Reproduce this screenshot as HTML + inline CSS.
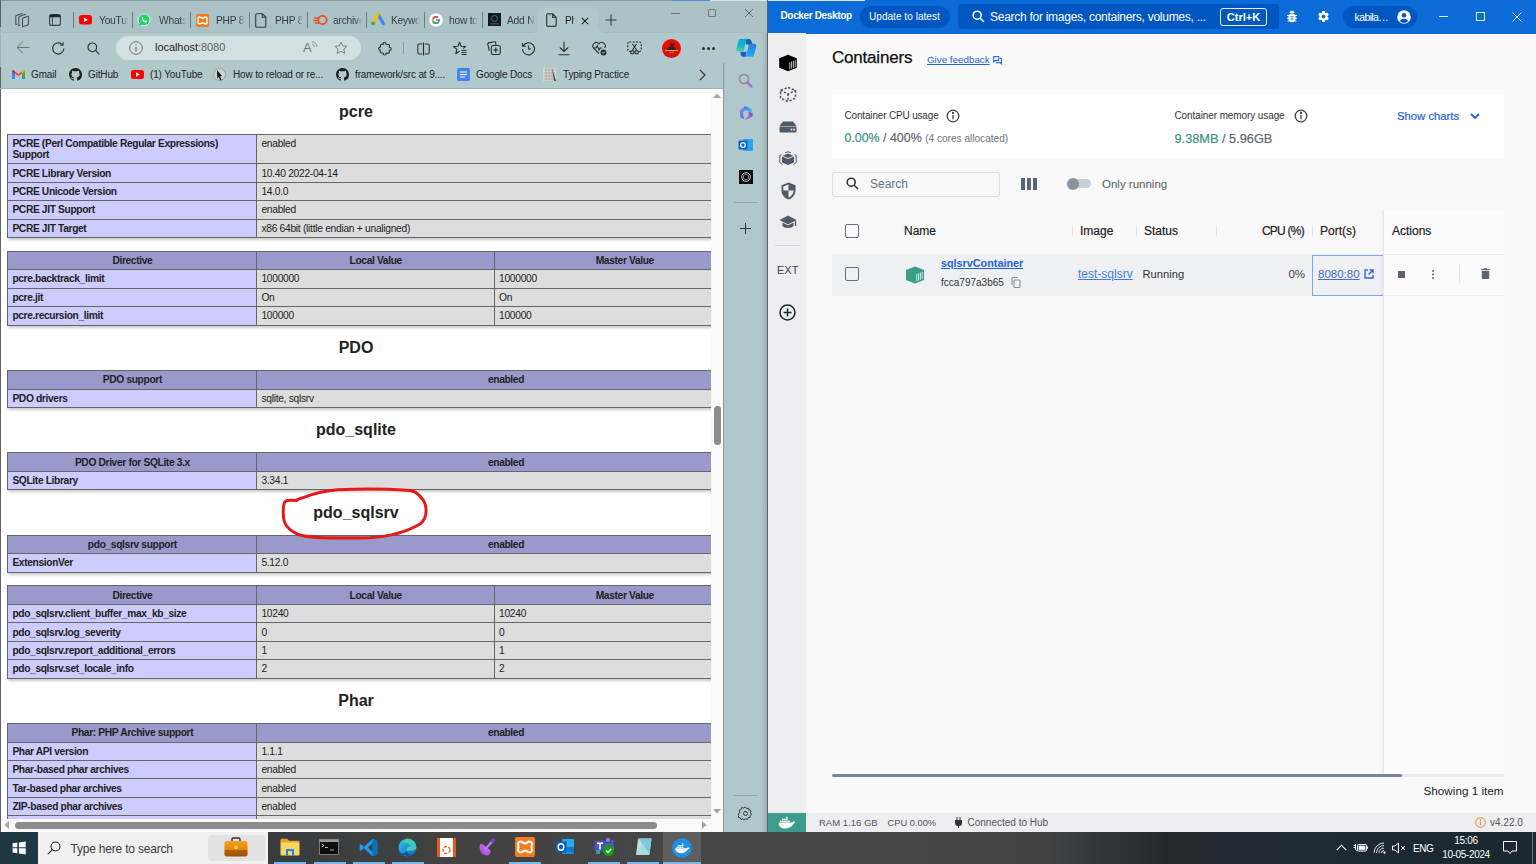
<!DOCTYPE html>
<html><head><meta charset="utf-8">
<style>
*{box-sizing:border-box;margin:0;padding:0}
html,body{width:1536px;height:864px;overflow:hidden;background:#fff;font-family:"Liberation Sans",sans-serif}
.a{position:absolute}
/* ---- edge ---- */
#edge{position:absolute;left:0;top:0;width:768px;height:832px;background:#adc4c8;overflow:hidden}
#tabs{position:absolute;left:0;top:0;width:768px;height:32px;background:#abc3c7}
#toolbar{position:absolute;left:0;top:32px;width:768px;height:30px;background:#b2c9cc}
#bm{position:absolute;left:0;top:62px;width:723px;height:27px;background:#b2c9cc}
#side{position:absolute;left:723px;top:62px;width:45px;height:770px;background:#b0c8cc}
#page{position:absolute;left:1px;top:89px;width:710px;height:730px;background:#fff;overflow:hidden}
/* ---- docker ---- */
#dock{position:absolute;left:768px;top:0;width:768px;height:832px;background:#f9f9f9;overflow:hidden}
#dtitle{position:absolute;left:0;top:0;width:768px;height:33.5px;background:#0b6cd7}
#dnav{position:absolute;left:0;top:33px;width:38px;height:780px;background:#eeeef1}
#dstatus{position:absolute;left:0;top:813px;width:768px;height:19px;background:#eeeef1}
/* ---- taskbar ---- */
#task{position:absolute;left:0;top:832px;width:1536px;height:32px;background:linear-gradient(90deg,#1d3640 0,#1f3a44 2.5%,#383c3e 17.5%,#424242 30%,#474747 50%,#434343 68%,#34383b 71%,#22292e 76%,#1d2a31 85%,#1b2830 100%)}

#php *{box-sizing:content-box}
#php{box-sizing:border-box;position:absolute;left:0;top:0;width:887.5px;zoom:0.8;color:#222;font-family:"Liberation Sans",sans-serif;font-size:16px;padding:0 8px}
#php table{border-collapse:collapse;border:0;width:934px;box-shadow:1px 2px 3px #ccc;margin:1em auto;text-align:left}
#php .center{text-align:center}
#php h2{font-size:125%;margin:0.83em 0;line-height:normal}
#php td,#php th{border:1px solid #666;font-size:12.8px;letter-spacing:-0.45px;vertical-align:baseline;padding:4px 5px;line-height:13.8px}
#php th{text-align:center}
#php .e{background-color:#ccf;width:300px;font-weight:bold}
#php .h{background-color:#99c;font-weight:bold}
#php .v{letter-spacing:-0.35px;background-color:#ddd;max-width:300px;overflow-x:auto;word-wrap:break-word}

.tt{font-size:10.2px;letter-spacing:-0.2px;color:#363d3f;white-space:nowrap;overflow:hidden;line-height:13px;-webkit-mask-image:linear-gradient(90deg,#000 78%,transparent 100%)}
.bt{top:68px;font-size:10px;color:#1f2324;white-space:nowrap;line-height:13px;letter-spacing:-0.15px}
</style></head><body>
<div id="edge">
  <div id="tabs"></div>
  <div id="toolbar"></div>
  <div id="bm"></div>
  <div id="side"></div>
<div class="a" style="left:0;top:0;width:768px;height:1px;background:#87979a"></div><div class="a" style="left:672px;top:0;width:38px;height:1px;background:#4a8fd8"></div><div class="a" style="left:710px;top:0;width:58px;height:1px;background:#dfe3e6"></div>
<div class="a" style="left:0;top:0;width:1px;height:832px;background:#5d6466"></div><div class="a" style="left:0;top:27px;width:1px;height:40px;background:#a3b0b2"></div>
<div class="a" style="left:0;top:32px;width:768px;height:1px;background:#a6bcbf"></div>
<!-- tab strip icons -->
<svg class="a" style="left:14.5px;top:12.5px" width="14" height="15" viewBox="0 0 14 15" fill="none" stroke="#4a5456" stroke-width="1.1" stroke-linejoin="round"><path d="M7.5 5.2L12.6 3.3Q13.5 3 13.5 4V10.8Q13.5 11.6 12.7 11.9L8.3 13.6Q7.5 13.9 7.5 13V5.2Z"/><path d="M5 12.3L4.3 12.6Q3.8 12.7 3.8 12.2V4.5Q3.8 3.8 4.5 3.5L9.7 1.6Q10.5 1.4 10.5 2"/><path d="M2.2 11.2L1.3 11.4Q0.8 11.5 0.8 11V3.4Q0.8 2.7 1.5 2.4L6.3 0.7Q7 0.5 7.2 1"/></svg>
<svg class="a" style="left:49px;top:14px" width="12" height="12" viewBox="0 0 12 12"><rect x="0.6" y="0.6" width="10.8" height="10.8" rx="2" fill="none" stroke="#3b4446" stroke-width="1.1"/><path d="M0.6 2.6Q0.6 0.6 2.6 0.6H9.4Q11.4 0.6 11.4 2.6V3.2H0.6Z" fill="#1f2526"/><path d="M3.4 3V11.4" stroke="#3b4446" stroke-width="0.9"/></svg>
<div class="a" style="left:73px;top:12px;width:1px;height:16px;background:#6f7f82"></div>
<svg class="a" style="left:78.5px;top:15px" width="13" height="10" viewBox="0 0 13 10"><rect width="13" height="9.5" rx="2.5" fill="#f00"/><path d="M5 2.6V6.9L8.8 4.75Z" fill="#fff"/></svg><div class="a tt" style="left:99px;top:14px;width:29px">YouTube</div><div class="a" style="left:132px;top:12px;width:1px;height:16px;background:#6f7f82"></div><svg class="a" style="left:137px;top:13px" width="14" height="14" viewBox="0 0 14 14"><circle cx="7" cy="6.8" r="6" fill="#25d366" stroke="#fff" stroke-width="0.8"/><path d="M1.8 12.8 L2.8 9.5 L4.8 11.5Z" fill="#25d366"/><path d="M4.8 4.2c0.3-0.6 0.8-0.6 1 0l0.5 1c0.1 0.3-0.4 0.6-0.3 0.9c0.4 0.8 1.1 1.4 1.9 1.8c0.3 0.1 0.6-0.4 0.9-0.3l1 0.5c0.5 0.3 0.4 0.8-0.1 1.2c-2 1.2-5.4-2-4.9-5.1z" fill="#fff"/></svg><div class="a tt" style="left:159px;top:14px;width:27px">WhatsApp</div><div class="a" style="left:190px;top:12px;width:1px;height:16px;background:#6f7f82"></div><svg class="a" style="left:196px;top:13.5px" width="13" height="13" viewBox="0 0 13 13"><rect width="13" height="13" rx="1.5" fill="#f57a1f"/><path d="M3.5 3C2 3 1.8 4.3 2.1 5.3C2.3 6 2.3 7 2.1 7.7C1.8 8.7 2 10 3.5 10C4.8 10 5.3 9 6.5 8.8C7.7 9 8.2 10 9.5 10C11 10 11.2 8.7 10.9 7.7C10.7 7 10.7 6 10.9 5.3C11.2 4.3 11 3 9.5 3C8.2 3 7.7 4 6.5 4.2C5.3 4 4.8 3 3.5 3Z" fill="none" stroke="#fff" stroke-width="1.4"/></svg><div class="a tt" style="left:216px;top:14px;width:29px">PHP 8.2</div><div class="a" style="left:249px;top:12px;width:1px;height:16px;background:#6f7f82"></div><svg class="a" style="left:255px;top:13px" width="12" height="15" viewBox="0 0 12 15" fill="none" stroke="#3a3a3a" stroke-width="1.1"><path d="M2 0.8H7.5L10.8 4.1V13a1.3 1.3 0 0 1-1.3 1.3H2A1.3 1.3 0 0 1 0.7 13V2.1A1.3 1.3 0 0 1 2 0.8z M7.3 0.8V4.3H10.8"/></svg><div class="a tt" style="left:275px;top:14px;width:28px">PHP 8.2</div><div class="a" style="left:307px;top:12px;width:1px;height:16px;background:#6f7f82"></div><svg class="a" style="left:313px;top:14px" width="15" height="12" viewBox="0 0 15 12"><path d="M1 4h5M0 6.5h5M2 9h4" stroke="#f04e23" stroke-width="1.4"/><circle cx="9.5" cy="6" r="4.2" fill="none" stroke="#f04e23" stroke-width="1.8"/></svg><div class="a tt" style="left:333px;top:14px;width:29px">archive</div><div class="a" style="left:366px;top:12px;width:1px;height:16px;background:#6f7f82"></div><svg class="a" style="left:371px;top:13px" width="14" height="13" viewBox="0 0 14 13"><path d="M7.2 1.5L12.3 10.5" stroke="#4285f4" stroke-width="3.4" stroke-linecap="round"/><path d="M6.8 1.5L2.3 9.5" stroke="#fbbc04" stroke-width="3.4" stroke-linecap="round"/><circle cx="2.2" cy="10.3" r="1.9" fill="#34a853"/></svg><div class="a tt" style="left:391px;top:14px;width:29px">Keyword</div><div class="a" style="left:424px;top:12px;width:1px;height:16px;background:#6f7f82"></div><svg class="a" style="left:429px;top:13px" width="14" height="14" viewBox="0 0 14 14"><circle cx="7" cy="7" r="6.8" fill="#fff"/><path d="M10.8 6.2H7v1.6h2.2c-0.3 1-1.1 1.7-2.2 1.7a2.5 2.5 0 1 1 1.6-4.4l1.1-1.1A4.1 4.1 0 1 0 11 7c0-0.3 0-0.5-0.1-0.8z" fill="#4285f4"/><path d="M3.4 5.2A4.1 4.1 0 0 1 9.7 4l-1.1 1.1A2.5 2.5 0 0 0 4.8 5.9z" fill="#ea4335"/><path d="M3.3 8.7A4.1 4.1 0 0 0 9.3 10.3l-1-1a2.5 2.5 0 0 1-3.5-1.2z" fill="#34a853"/><path d="M2.9 7a4.1 4.1 0 0 0 0.4 1.7l1.5-0.6a2.5 2.5 0 0 1 0-2.2l-1.4-0.7A4.1 4.1 0 0 0 2.9 7z" fill="#fbbc04"/></svg><div class="a tt" style="left:449px;top:14px;width:29px">how to</div><div class="a" style="left:482px;top:12px;width:1px;height:16px;background:#6f7f82"></div><svg class="a" style="left:487.5px;top:13px" width="13" height="13" viewBox="0 0 13 13"><rect width="13" height="13" fill="#151a1e"/><circle cx="6.5" cy="5.5" r="3" fill="none" stroke="#2d7da0" stroke-width="0.9"/><rect x="2" y="10" width="9" height="1.5" fill="#3c4650"/></svg><div class="a tt" style="left:507px;top:14px;width:28px">Add New</div><!-- active tab -->
<div class="a" style="left:538px;top:6.5px;width:60px;height:27px;background:#b2c9cc;border-radius:6px 6px 0 0"></div>
<div class="a" style="left:533px;top:27px;width:6px;height:6px;background:radial-gradient(circle at 0 0,transparent 5.5px,#b2c9cc 6px)"></div>
<div class="a" style="left:598px;top:27px;width:6px;height:6px;background:radial-gradient(circle at 100% 0,transparent 5.5px,#b2c9cc 6px)"></div>
<svg class="a" style="left:546px;top:13px" width="11" height="14" viewBox="0 0 11 14" fill="none" stroke="#3a3a3a" stroke-width="1.2"><path d="M2 0.8H6.8L10.2 4.2V12a1.3 1.3 0 0 1-1.3 1.3H2A1.3 1.3 0 0 1 0.7 12V2.1A1.3 1.3 0 0 1 2 0.8z M6.6 0.8V4.3H10.2"/></svg>
<div class="a tt" style="left:565px;top:14px;width:10px;color:#222">Ph</div>
<svg class="a" style="left:581px;top:16.5px" width="8" height="8" viewBox="0 0 8 8" stroke="#222" stroke-width="1.1"><path d="M0.8 0.8L7.2 7.2M7.2 0.8L0.8 7.2"/></svg>
<svg class="a" style="left:605px;top:14px" width="12" height="12" viewBox="0 0 12 12" stroke="#333" stroke-width="1"><path d="M6 0.5V11.5M0.5 6H11.5"/></svg>
<!-- window controls -->
<div class="a" style="left:671px;top:13px;width:9px;height:1px;background:#777"></div>
<div class="a" style="left:708px;top:9px;width:8px;height:8px;border:1px solid #777;border-radius:1px"></div>
<svg class="a" style="left:744px;top:8px" width="10" height="10" viewBox="0 0 10 10" stroke="#666" stroke-width="1"><path d="M1 1L9 9M9 1L1 9"/></svg>
<!-- toolbar -->
<svg class="a" style="left:16px;top:41px" width="14" height="13" viewBox="0 0 14 13" fill="none" stroke="#6a7375" stroke-width="1"><path d="M13.5 6.5H1M6.8 0.8L1 6.5L6.8 12.2"/></svg>
<svg class="a" style="left:51px;top:41px" width="15" height="15" viewBox="0 0 15 15" fill="none" stroke="#2f3435" stroke-width="1.2"><path d="M12.8 7.5A5.6 5.6 0 1 1 10.6 3"/><path d="M9.3 4.2L12 4.2L12 1.2" stroke-width="1.2"/></svg>
<svg class="a" style="left:87px;top:42px" width="13" height="13" viewBox="0 0 13 13" fill="none" stroke="#2f3435" stroke-width="1.2"><circle cx="5.3" cy="5.3" r="4.3"/><path d="M8.4 8.4L12.3 12.3"/></svg>
<div class="a" style="left:116px;top:36px;width:245px;height:24px;border-radius:12px;background:#d3e0e2"></div>
<svg class="a" style="left:129px;top:41px" width="14" height="14" viewBox="0 0 14 14" fill="none" stroke="#666" stroke-width="0.9"><circle cx="7" cy="7" r="6.3"/><path d="M7 6V10.5" stroke-width="1.1"/><circle cx="7" cy="3.9" r="0.6" fill="#666" stroke="none"/></svg>
<div class="a" style="left:155px;top:41px;font-size:11px;color:#1f1f1f;letter-spacing:-0.05px">localhost<span style="color:#5b6366">:8080</span></div>
<div class="a" style="left:303px;top:40px;font-size:13px;color:#777;font-weight:normal">A</div>
<svg class="a" style="left:311px;top:41px" width="7" height="7" viewBox="0 0 7 7" fill="none" stroke="#888" stroke-width="0.8"><path d="M1 3.5A2.5 2.5 0 0 1 3.5 6M1 1A5 5 0 0 1 6 6"/></svg>
<svg class="a" style="left:334px;top:41px" width="14" height="14" viewBox="0 0 14 14" fill="none" stroke="#7a8385" stroke-width="1"><path d="M7 1L8.8 5L13 5.3L9.8 8.1L10.8 12.5L7 10.2L3.2 12.5L4.2 8.1L1 5.3L5.2 5Z" stroke-linejoin="round"/></svg>
<svg class="a" style="left:377.5px;top:41px" width="14" height="15" viewBox="0 0 14 15" fill="none" stroke="#2a2e2f" stroke-width="1.1" stroke-linejoin="round"><path d="M6.5 1.2C7.6 1.2 8 2.2 7.8 3.2L10.8 3.5C11.3 3.6 11.5 4 11.4 4.5L11.2 6.3C12.3 6.2 13.2 6.8 13.2 7.8S12.3 9.4 11.2 9.3L11.3 11.4C11.3 11.9 11 12.2 10.5 12.2L8 12.1C8.2 13.2 7.6 14 6.6 14S5 13.2 5.2 12.1L2.8 11.8C2.3 11.7 2 11.4 2.1 10.9L2.3 9C1.2 9.2 0.7 8.4 0.7 7.5S1.3 5.9 2.4 6.1L2.6 4C2.7 3.5 3 3.2 3.5 3.2L5.3 3.2C5.1 2.1 5.5 1.2 6.5 1.2Z"/></svg>
<div class="a" style="left:403px;top:42px;width:1px;height:12px;background:#8a9a9d"></div>
<svg class="a" style="left:416.5px;top:41.5px" width="13" height="14" viewBox="0 0 13 14" fill="none" stroke="#2a2e2f" stroke-width="1.1"><path d="M5.2 2H2.2Q0.8 2 0.8 3.4V10.6Q0.8 12 2.2 12H5.2M7.8 2H10.8Q12.2 2 12.2 3.4V10.6Q12.2 12 10.8 12H7.8"/><path d="M6.5 0.5V13.5" stroke-width="1.2"/></svg>
<svg class="a" style="left:452px;top:41px" width="15" height="15" viewBox="0 0 15 15" fill="none" stroke="#2a2e2f" stroke-width="1.1" stroke-linejoin="round"><path d="M7.5 10.3L3.8 12.7L4.9 8.4L1.5 5.6L5.9 5.3L7.5 1.2L9.1 5.3L13.5 5.6L11.2 7.5"/><path d="M9.5 9.5H14.5M9.5 11.5H14.5M9.5 13.5H14.5"/></svg>
<svg class="a" style="left:487px;top:41px" width="14" height="14" viewBox="0 0 14 14" fill="none" stroke="#2a2e2f" stroke-width="1.1" stroke-linejoin="round"><path d="M2.3 9.8L0.8 3.2Q0.6 2.2 1.6 1.9L7.5 0.8Q8.5 0.6 8.7 1.6L8.9 4.3"/><rect x="4.3" y="4.5" width="9" height="9" rx="1.8"/><path d="M8.8 6.5V11.5M6.3 9H11.3" stroke-width="1.2"/></svg>
<svg class="a" style="left:521px;top:41px" width="15" height="15" viewBox="0 0 15 15" fill="none" stroke="#2a2e2f" stroke-width="1.1"><path d="M2.2 5A6 6 0 1 1 1.5 8"/><path d="M1.5 2V5.3H4.8M7.5 4.5V8H10"/></svg>
<svg class="a" style="left:558px;top:41px" width="12" height="15" viewBox="0 0 12 15" fill="none" stroke="#2a2e2f" stroke-width="1.1"><path d="M6 0.5V10.5M1.8 6.5L6 10.5L10.2 6.5M0.5 13.8H11.5"/></svg>
<svg class="a" style="left:592px;top:41px" width="15" height="15" viewBox="0 0 15 15" fill="none" stroke="#2a2e2f" stroke-width="1.1"><path d="M7 12.5L1.8 7.3A3.3 3.3 0 0 1 7 2.8A3.3 3.3 0 0 1 12.5 7"/><path d="M1 7H4L5.3 4.8L7 9L8.3 7H10"/><circle cx="11.5" cy="11.5" r="3" fill="#2a2e2f" stroke="none"/><path d="M10.2 11.5L11.2 12.4L12.8 10.6" stroke="#fff" stroke-width="0.8"/></svg>
<svg class="a" style="left:627px;top:41px" width="15" height="14" viewBox="0 0 15 14" fill="none" stroke="#2a2e2f" stroke-width="1.1"><rect x="0.8" y="1" width="13.4" height="9.5" rx="1.5" stroke-dasharray="2 1.3"/><path d="M5.5 3L9.5 9M9.5 3L5.5 9"/><circle cx="5.3" cy="11.3" r="1.7" fill="#b2c9cc"/><circle cx="9.7" cy="11.3" r="1.7" fill="#b2c9cc"/></svg>
<div class="a" style="left:662px;top:38.5px;width:19px;height:19px;border-radius:50%;background:#e60b0b;overflow:hidden"><div class="a" style="left:7.5px;top:4.5px;width:4px;height:4px;border-radius:50%;background:#3a2418"></div><div class="a" style="left:5px;top:8px;width:9px;height:4px;border-radius:3px 3px 0 0;background:#2b2420"></div><div class="a" style="left:3px;top:11px;width:13px;height:1.6px;background:#c8c020"></div><div class="a" style="left:7px;top:13px;width:5px;height:1.2px;background:#777"></div></div>
<div class="a" style="left:702px;top:47px;width:3px;height:3px;border-radius:50%;background:#2a2e2f"></div>
<div class="a" style="left:707px;top:47px;width:3px;height:3px;border-radius:50%;background:#2a2e2f"></div>
<div class="a" style="left:712px;top:47px;width:3px;height:3px;border-radius:50%;background:#2a2e2f"></div>
<svg class="a" style="left:733px;top:36px" width="26" height="24" viewBox="733 36 26 24"><defs><linearGradient id="cpa" x1="0" y1="1" x2="0.3" y2="0"><stop offset="0" stop-color="#55d98a"/><stop offset="0.5" stop-color="#19b5c9"/><stop offset="1" stop-color="#07a6e0"/></linearGradient><linearGradient id="cpb" x1="0.3" y1="1" x2="0.7" y2="0"><stop offset="0" stop-color="#17b4f7"/><stop offset="1" stop-color="#2b7be0"/></linearGradient></defs><path d="M745.5 39.2L749 38.9C750.5 38.9 751.3 40 751.6 41.5L752.3 44.2L746 44.5Z" fill="#0c6a9f"/><path d="M740.5 52L746.5 51.8L745.5 56.8H743.2C741.8 56.8 741 55.8 740.7 54.5Z" fill="#2a4fd6"/><path d="M740.5 38.8H748.2C746.8 39.5 746.2 40.8 745.8 42.5L743.5 51.8H738.2C736.6 51.8 735.9 50.6 736.3 49L738.3 41.2C738.7 39.8 739.3 38.8 740.5 38.8Z" fill="url(#cpa)"/><path d="M752 56.8H744.3C745.7 56.1 746.3 54.8 746.7 53.1L749 43.8H754.3C755.9 43.8 756.6 45 756.2 46.6L754.2 54.4C753.8 55.8 753.2 56.8 752 56.8Z" fill="url(#cpb)"/></svg>
<!-- bookmarks -->
<div class="a" style="left:0;top:88px;width:723px;height:1px;background:#9cafb2"></div>
<svg class="a" style="left:12px;top:70px" width="13" height="9" viewBox="0 0 13 9"><path d="M0 1.2V9H3V3.5L6.5 6L10 3.5V9H13V1.2L12 0L6.5 4L1 0Z" fill="#ea4335"/><path d="M0 1.2V9H3V3.5Z" fill="#4285f4"/><path d="M10 3.5V9H13V1.2Z" fill="#34a853"/><path d="M13 1.2L12 0L10 1.5V3.5Z" fill="#fbbc04"/><path d="M0 1.2L1 0L3 1.5V3.5Z" fill="#c5221f"/></svg>
<div class="a bt" style="left:31px">Gmail</div>
<svg class="a" style="left:69px;top:68px" width="13" height="13" viewBox="0 0 16 16"><path fill="#1b1f23" d="M8 0C3.58 0 0 3.58 0 8c0 3.54 2.29 6.53 5.47 7.59.4.07.55-.17.55-.38 0-.19-.01-.82-.01-1.49-2.01.37-2.53-.49-2.69-.94-.09-.23-.48-.94-.82-1.13-.28-.15-.68-.52-.01-.53.63-.01 1.08.58 1.23.82.72 1.21 1.87.87 2.33.66.07-.52.28-.87.51-1.07-1.78-.2-3.64-.89-3.64-3.95 0-.87.31-1.59.82-2.15-.08-.2-.36-1.02.08-2.12 0 0 .67-.21 2.2.82.64-.18 1.32-.27 2-.27.68 0 1.36.09 2 .27 1.53-1.04 2.2-.82 2.2-.82.44 1.1.16 1.92.08 2.12.51.56.82 1.27.82 2.15 0 3.07-1.87 3.75-3.65 3.95.29.25.54.73.54 1.48 0 1.07-.01 1.93-.01 2.2 0 .21.15.46.55.38A8.013 8.013 0 0016 8c0-4.42-3.58-8-8-8z"/></svg>
<div class="a bt" style="left:88px">GitHub</div>
<svg class="a" style="left:131px;top:70px" width="13" height="9" viewBox="0 0 13 9"><rect width="13" height="9" rx="2.3" fill="#f00"/><path d="M5 2.3V6.7L8.8 4.5Z" fill="#fff"/></svg>
<div class="a bt" style="left:150px">(1) YouTube</div>
<svg class="a" style="left:213px;top:68px" width="13" height="13" viewBox="0 0 13 13"><circle cx="6.5" cy="6.5" r="6" fill="#c8d4d6" stroke="#7d8a8c" stroke-width="0.6"/><path d="M4 2L9 8L7 8.5L8.5 12L7.3 12.5L5.8 9L4.3 10.5Z" fill="#111"/></svg>
<div class="a bt" style="left:233px">How to reload or re...</div>
<svg class="a" style="left:336px;top:68px" width="13" height="13" viewBox="0 0 16 16"><path fill="#1b1f23" d="M8 0C3.58 0 0 3.580 0 8c0 3.54 2.29 6.53 5.47 7.59.4.07.55-.17.55-.38 0-.19-.01-.82-.01-1.49-2.01.37-2.53-.49-2.690-.94-.09-.23-.48-.94-.82-1.13-.28-.15-.68-.52-.01-.53.63-.01 1.08.58 1.23.82.72 1.21 1.87.87 2.33.66.07-.52.28-.87.51-1.07-1.78-.2-3.64-.89-3.64-3.95 0-.87.31-1.59.82-2.15-.08-.2-.36-1.02.08-2.12 0 0 .67-.21 2.2.82.64-.18 1.32-.27 2-.27.68 0 1.36.09 2 .27 1.53-1.04 2.2-.82 2.2-.82.44 1.1.16 1.92.08 2.12.51.56.82 1.27.82 2.15 0 3.07-1.87 3.75-3.65 3.95.29.25.54.73.54 1.48 0 1.07-.01 1.93-.01 2.2 0 .21.15.46.55.38A8.013 8.013 0 0016 8c0-4.42-3.58-8-8-8z"/></svg>
<div class="a bt" style="left:355px">framework/src at 9....</div>
<svg class="a" style="left:457px;top:68px" width="13" height="13" viewBox="0 0 13 13"><rect width="13" height="13" rx="1.5" fill="#4285f4"/><path d="M3 4H10M3 6.5H10M3 9H8" stroke="#fff" stroke-width="1.2"/></svg>
<div class="a bt" style="left:476px">Google Docs</div>
<svg class="a" style="left:543px;top:68px" width="13" height="13" viewBox="0 0 13 13"><rect width="13" height="13" fill="#d8d8d8"/><path d="M1 2H12M1 5H12M1 8H12M1 11H12M3 0V13M6 0V13M9 0V13" stroke="#9a9a9a" stroke-width="0.6"/><path d="M9 0L13 13H11Z" fill="#444"/></svg>
<div class="a bt" style="left:563px">Typing Practice</div>
<svg class="a" style="left:699px;top:69px" width="7" height="12" viewBox="0 0 7 12" fill="none" stroke="#333" stroke-width="1.1"><path d="M1 1L6 6L1 11"/></svg>
<!-- sidebar -->
<div class="a" style="left:723px;top:63px;width:1px;height:769px;background:#8b9a9d"></div>
<div class="a" style="left:761px;top:33px;width:6px;height:799px;background:linear-gradient(90deg,rgba(150,170,174,0),rgba(140,160,164,0.55))"></div>
<div class="a" style="left:767px;top:0;width:1px;height:832px;background:#5b6264"></div>
<svg class="a" style="left:738px;top:73px" width="15" height="15" viewBox="0 0 15 15"><circle cx="6" cy="6" r="4.5" fill="none" stroke="#8b8b8b" stroke-width="1.6"/><path d="M9.3 9.3L13.5 13.5" stroke="#a66ad8" stroke-width="2.4" stroke-linecap="round"/></svg>
<svg class="a" style="left:738px;top:105px" width="16" height="16" viewBox="738 105 16 16"><defs><linearGradient id="m1" x1="0" y1="0" x2="1" y2="1"><stop offset="0" stop-color="#3a6fe0"/><stop offset="1" stop-color="#4fd6f5"/></linearGradient><linearGradient id="m2" x1="1" y1="0" x2="0" y2="1"><stop offset="0" stop-color="#6b3fb0"/><stop offset="1" stop-color="#d28af5"/></linearGradient><linearGradient id="m3" x1="0" y1="0" x2="0" y2="1"><stop offset="0" stop-color="#b07af0"/><stop offset="1" stop-color="#2f7fe0"/></linearGradient></defs><path d="M744 106.8L746 106.2L752 109.6L752.8 113.5L748.7 111.5L746.3 110.3L744.3 111Z" fill="url(#m1)"/><path d="M752.8 113.5L752.7 116.3L746.5 120L744 119.2L748 116.6L748.8 114.3L748.7 111.5Z" fill="url(#m2)"/><path d="M744 119.2L740.5 117.3L739.8 110.5L744 106.8L744.3 111L743 112.3L743.3 115.3Z" fill="url(#m3)"/></svg>
<svg class="a" style="left:738px;top:137px" width="16" height="16" viewBox="0 0 16 16"><rect x="5" y="2" width="10" height="12" rx="1" fill="#28a8ea"/><rect x="0.5" y="3.5" width="9" height="9" rx="1" fill="#0a64c8"/><circle cx="5" cy="8" r="2.3" fill="none" stroke="#fff" stroke-width="1.3"/></svg>
<svg class="a" style="left:739px;top:170px" width="14" height="14" viewBox="0 0 14 14"><rect width="14" height="14" fill="#0b0b0b"/><circle cx="7" cy="7" r="4.3" fill="none" stroke="#cfcfcf" stroke-width="1"/><path d="M4.5 5.5L7 4L9.5 5.5V8.5L7 10L4.5 8.5Z" fill="none" stroke="#bbb" stroke-width="0.7"/></svg>
<div class="a" style="left:734px;top:202px;width:23px;height:1px;background:#94a6a9"></div>
<svg class="a" style="left:740px;top:223px" width="11" height="11" viewBox="0 0 11 11" stroke="#333" stroke-width="1"><path d="M5.5 0V11M0 5.5H11"/></svg>
<div class="a" style="left:734px;top:795px;width:23px;height:1px;background:#94a6a9"></div>
<svg class="a" style="left:738px;top:806px" width="15" height="15" viewBox="0 0 24 24" fill="none" stroke="#333" stroke-width="1.6"><path d="M12 1.8l2 2.6 3.2-.6.9 3.1 3 1.3-.9 3.1 1.9 2.7-2.6 1.9.2 3.2-3.2.4-1.4 2.9-3-1.2-2.1 2.4-2.1-2.4-3 1.2-1.4-2.9-3.2-.4.2-3.2L.8 13.1l1.9-2.7-.9-3.1 3-1.3.9-3.1 3.2.6z" transform="translate(0.3 -0.2) scale(0.97)"/><circle cx="12" cy="12" r="3.2"/></svg>

  <!--PAGE--><div id="page"><div id="php" style="top:0.5px"><div class="center"><h2>pcre</h2><table><tr><td class="e">PCRE (Perl Compatible Regular Expressions) Support </td><td class="v">enabled </td></tr><tr><td class="e">PCRE Library Version </td><td class="v">10.40 2022-04-14 </td></tr><tr><td class="e">PCRE Unicode Version </td><td class="v">14.0.0 </td></tr><tr><td class="e">PCRE JIT Support </td><td class="v">enabled </td></tr><tr><td class="e">PCRE JIT Target </td><td class="v">x86 64bit (little endian + unaligned) </td></tr></table><table><tr class="h"><th>Directive</th><th>Local Value</th><th>Master Value</th></tr><tr><td class="e">pcre.backtrack_limit</td><td class="v">1000000</td><td class="v">1000000</td></tr><tr><td class="e">pcre.jit</td><td class="v">On</td><td class="v">On</td></tr><tr><td class="e">pcre.recursion_limit</td><td class="v">100000</td><td class="v">100000</td></tr></table><h2>PDO</h2><table><tr class="h"><th>PDO support</th><th>enabled</th></tr><tr><td class="e">PDO drivers </td><td class="v">sqlite, sqlsrv </td></tr></table><h2>pdo_sqlite</h2><table><tr class="h"><th>PDO Driver for SQLite 3.x</th><th>enabled</th></tr><tr><td class="e">SQLite Library </td><td class="v">3.34.1 </td></tr></table><h2>pdo_sqlsrv</h2><table><tr class="h"><th>pdo_sqlsrv support</th><th>enabled</th></tr><tr><td class="e">ExtensionVer </td><td class="v">5.12.0 </td></tr></table><table><tr class="h"><th>Directive</th><th>Local Value</th><th>Master Value</th></tr><tr><td class="e">pdo_sqlsrv.client_buffer_max_kb_size</td><td class="v">10240</td><td class="v">10240</td></tr><tr><td class="e">pdo_sqlsrv.log_severity</td><td class="v">0</td><td class="v">0</td></tr><tr><td class="e">pdo_sqlsrv.report_additional_errors</td><td class="v">1</td><td class="v">1</td></tr><tr><td class="e">pdo_sqlsrv.set_locale_info</td><td class="v">2</td><td class="v">2</td></tr></table><h2>Phar</h2><table><tr class="h"><th>Phar: PHP Archive support</th><th>enabled</th></tr><tr><td class="e">Phar API version </td><td class="v">1.1.1 </td></tr><tr><td class="e">Phar-based phar archives </td><td class="v">enabled </td></tr><tr><td class="e">Tar-based phar archives </td><td class="v">enabled </td></tr><tr><td class="e">ZIP-based phar archives </td><td class="v">enabled </td></tr><tr><td class="e">Phar-based phar archives </td><td class="v">gz, bz2 </td></tr><tr><td class="e">Phar fully realized </td><td class="v">enabled </td></tr></table></div></div>

</div><div class="a" style="left:711px;top:89px;width:12px;height:743px;background:#fafafa"></div>
<div class="a" style="left:1px;top:819px;width:710px;height:13px;background:#fafafa"></div>
<svg class="a" style="left:713px;top:93px" width="8" height="6" viewBox="0 0 8 6"><path d="M0 5H8L4 0.5Z" fill="#a3a3a3"/></svg>
<svg class="a" style="left:713px;top:808px" width="8" height="6" viewBox="0 0 8 6"><path d="M0 1H8L4 5.5Z" fill="#a3a3a3"/></svg>
<div class="a" style="left:713.5px;top:406px;width:7px;height:39px;border-radius:3.5px;background:#8c8c8c"></div>
<svg class="a" style="left:4px;top:821px" width="6" height="8" viewBox="0 0 6 8"><path d="M5 0V8L0.5 4Z" fill="#a3a3a3"/></svg>
<svg class="a" style="left:701px;top:821px" width="6" height="8" viewBox="0 0 6 8"><path d="M1 0V8L5.5 4Z" fill="#a3a3a3"/></svg>
<div class="a" style="left:15px;top:821.5px;width:642px;height:7.5px;border-radius:3.75px;background:#8c8c8c"></div>
<svg class="a" style="left:0;top:0" width="768" height="832" viewBox="0 0 768 832" fill="none"><path d="M296.6 500.5 C292 500, 288 500, 286 500.8 C283 502, 283 512, 283.5 517 C284 526, 292 532, 300 535 C310 538, 340 538.5, 370 537.8 C395 536, 410 530, 420 524 C428 518, 427.5 505, 422 498.5 C418 493, 414 490.8, 410 490.4 C390 489, 358 488.8, 338 489.8 C318 491, 305 497, 297.7 499.5" stroke="#e61919" stroke-width="3" stroke-linecap="round" stroke-linejoin="round"/></svg>
</div>
<div id="dock">
  <div id="dtitle"></div>
  <div id="dnav"></div>
  <div id="dstatus"></div>
<div class="a" style="left:0;top:0;width:97px;height:1px;background:#dfe3e6"></div>
<div class="a" style="left:12.5px;top:10px;font-size:10px;font-weight:bold;color:#fff;line-height:12px;letter-spacing:-0.35px">Docker Desktop</div>
<div class="a" style="left:92px;top:6px;width:90px;height:22px;border-radius:11px;background:#0057c2"></div>
<div class="a" style="left:101px;top:10.5px;font-size:10px;color:#fff;line-height:12px;letter-spacing:0.05px">Update to latest</div>
<div class="a" style="left:190px;top:4px;width:321px;height:25px;border-radius:3px;background:#0057c2"></div>
<svg class="a" style="left:204px;top:10px" width="13" height="13" viewBox="0 0 13 13" fill="none" stroke="#fff" stroke-width="1.6"><circle cx="5.2" cy="5.2" r="4"/><path d="M8.2 8.2L12 12"/></svg>
<div class="a" style="left:222px;top:9.5px;font-size:12px;color:#fff;line-height:15px;letter-spacing:-0.27px">Search for images, containers, volumes, ...</div>
<div class="a" style="left:452px;top:8px;width:47px;height:18px;border:1px solid #e6efff;border-radius:3px"></div>
<div class="a" style="left:452px;top:10px;width:47px;text-align:center;font-size:11px;font-weight:bold;color:#fff;line-height:14px">Ctrl+K</div>
<svg class="a" style="left:519px;top:10px" width="10" height="13" viewBox="0 0 10 13" fill="#fff"><path d="M2.5 3.2A2.5 2.5 0 0 1 7.5 3.2Z"/><rect x="1.5" y="3.8" width="7" height="8.5" rx="3.3"/><path d="M0 5.5H2M8 5.5H10M0 8.3H2M8 8.3H10M0.5 11H2M8 11H9.5" stroke="#fff" stroke-width="1.1"/><path d="M3.5 6.8H6.5M3.5 9H6.5" stroke="#0b6cd7" stroke-width="1"/></svg>
<svg class="a" style="left:549px;top:10px" width="13" height="13" viewBox="0 0 24 24" fill="#fff"><path d="M19.4 13c.04-.3.06-.6.06-1s-.02-.7-.06-1l2.1-1.6c.2-.15.24-.42.12-.64l-2-3.46c-.12-.22-.39-.3-.61-.22l-2.5 1c-.52-.4-1.08-.73-1.69-.98l-.38-2.65A.49.49 0 0 0 14 2h-4c-.25 0-.46.18-.49.42l-.38 2.65c-.61.25-1.17.59-1.69.98l-2.5-1c-.23-.09-.49 0-.61.22l-2 3.46c-.13.22-.07.49.12.64L4.57 11c-.04.3-.07.65-.07 1s.03.7.07 1l-2.11 1.65c-.19.15-.24.42-.12.64l2 3.46c.12.22.39.3.61.22l2.49-1c.52.4 1.08.73 1.69.98l.38 2.65c.03.24.24.42.49.42h4c.25 0 .46-.18.49-.42l.38-2.65c.61-.25 1.17-.58 1.69-.98l2.49 1c.23.09.49 0 .61-.22l2-3.46c.12-.22.07-.49-.12-.64L19.4 13zM12 15.5A3.5 3.5 0 1 1 12 8.5a3.5 3.5 0 0 1 0 7z"/></svg>
<div class="a" style="left:575px;top:6px;width:74px;height:22px;border-radius:11px;background:#0057c2"></div>
<div class="a" style="left:586.5px;top:10.5px;font-size:10.5px;color:#fff;line-height:13px;letter-spacing:-0.6px">kabila…</div>
<svg class="a" style="left:629px;top:10px" width="14" height="14" viewBox="0 0 14 14"><circle cx="7" cy="7" r="6.8" fill="#fff"/><circle cx="7" cy="5.3" r="2.3" fill="#0057c2"/><path d="M2.8 11C3.8 9.3 5.3 8.7 7 8.7S10.2 9.3 11.2 11A5.5 5.5 0 0 1 2.8 11Z" fill="#0057c2"/></svg>
<div class="a" style="left:671px;top:16px;width:9px;height:1px;background:#e8f0ff"></div>
<div class="a" style="left:708px;top:12px;width:8.5px;height:8.5px;border:1px solid #e8f0ff"></div>
<svg class="a" style="left:744px;top:12px" width="10" height="10" viewBox="0 0 10 10" stroke="#e8f0ff" stroke-width="1"><path d="M0.5 0.5L9.5 9.5M9.5 0.5L0.5 9.5"/></svg>
<!-- nav -->
<svg class="a" style="left:10px;top:53.5px" width="20" height="18" viewBox="0 0 20 18"><path d="M10 0.8L18.8 4.2V13.8L10 17.2L1.2 13.8V4.2Z" fill="#000"/><path d="M11.8 8.3V15.2M13.6 7.6V14.5M15.4 6.9V13.8M17.2 6.2V13.1" stroke="#d8d8dc" stroke-width="0.9"/></svg>
<svg class="a" style="left:11px;top:86px" width="18" height="17" viewBox="0 0 18 17" fill="none" stroke="#4f5a68" stroke-width="1.6" stroke-dasharray="2.3 1.7"><path d="M9 1.5L16.5 4.5V12L9 15.5L1.5 12V4.5Z"/><path d="M1.5 4.5L9 8L16.5 4.5M9 8V15.5" stroke-dasharray="2 1.8"/></svg>
<svg class="a" style="left:11px;top:120.5px" width="18" height="12" viewBox="0 0 18 12"><path d="M4 0.5H14L17.5 5H0.5Z" fill="#4f5a68"/><rect x="0.5" y="5.5" width="17" height="6" rx="1" fill="#4f5a68"/><circle cx="12.5" cy="8.5" r="0.9" fill="#eeeef1"/><circle cx="15" cy="8.5" r="0.9" fill="#eeeef1"/></svg>
<svg class="a" style="left:11px;top:150.5px" width="18" height="16" viewBox="0 0 18 16"><path d="M9 2.5L15 5V11.5L9 14L3 11.5V5Z" fill="#4f5a68"/><path d="M3 5L9 7.5L15 5" fill="none" stroke="#eeeef1" stroke-width="0.9"/><path d="M2.5 3.5L0.8 4.5V11.5L3.5 13.5M15.5 3.5L17.2 4.5V11.5L14.5 13.5M6 1.8L9 0.8L12 1.8" fill="none" stroke="#4f5a68" stroke-width="1"/></svg>
<svg class="a" style="left:12.5px;top:181.5px" width="15" height="18" viewBox="0 0 15 18"><path d="M7.5 0.5L14.5 3.3V8.5C14.5 12.8 11.5 16.2 7.5 17.5C3.5 16.2 0.5 12.8 0.5 8.5V3.3Z" fill="#4f5a68"/><path d="M7.5 2.4L2.3 4.5V8.5H7.5Z M7.5 8.5H12.7C12.4 11.8 10.3 14.5 7.5 15.6Z" fill="#eeeef1"/></svg>
<svg class="a" style="left:11px;top:215px" width="18" height="15" viewBox="0 0 18 15"><path d="M9 0.5L17.5 5L9 9.5L0.5 5Z" fill="#4f5a68"/><path d="M3.5 7.5V11C5 13.5 13 13.5 14.5 11V7.5L9 10.5Z" fill="#4f5a68"/><path d="M16.5 5.5V11" stroke="#4f5a68" stroke-width="1.3"/></svg>
<div class="a" style="left:7px;top:245px;width:25px;height:1px;background:#d5d5da"></div>
<div class="a" style="left:9px;top:264px;font-size:11px;color:#3a4350;line-height:13px">EXT</div>
<svg class="a" style="left:11px;top:304px" width="17" height="17" viewBox="0 0 17 17" fill="none" stroke="#1f2933" stroke-width="1.6"><circle cx="8.5" cy="8.5" r="7.5"/><path d="M8.5 4.5V12.5M4.5 8.5H12.5"/></svg>
<!-- heading -->
<div class="a" style="left:64px;top:48px;font-size:17px;font-weight:normal;color:#111;line-height:20px;letter-spacing:-0.2px;-webkit-text-stroke:0.25px #111">Containers</div>
<div class="a" style="left:159px;top:54px;font-size:9.8px;color:#1d63d3;line-height:12px;text-decoration:underline">Give feedback</div>
<svg class="a" style="left:224.5px;top:56px" width="9" height="9" viewBox="0 0 9 9" fill="none" stroke="#2f6fd8" stroke-width="1.1"><path d="M0.6 0.6H5.8V4.4H2.3L0.6 5.8Z"/><path d="M6.8 2.4H8.4V7.8L7 6.6H3.2V5.4"/></svg>
<!-- stats card -->
<div class="a" style="left:64px;top:94px;width:672px;height:64px;background:#fff"></div>
<div class="a" style="left:76.5px;top:110px;font-size:10px;color:#333;line-height:12px;letter-spacing:-0.17px">Container CPU usage</div>
<svg class="a" style="left:178px;top:108.5px" width="14" height="14" viewBox="0 0 14 14" fill="none" stroke="#444" stroke-width="1.3"><circle cx="7" cy="7" r="5.8"/><path d="M7 6V10.3"/><circle cx="7" cy="4" r="0.5" fill="#444"/></svg>
<div class="a" style="left:76.5px;top:130.5px;font-size:12.4px;color:#3a937f;line-height:15px;letter-spacing:0;-webkit-text-stroke:0.2px #3a937f">0.00%<span style="color:#5f6670;-webkit-text-stroke:0.2px #5f6670"> / 400%</span> <span style="font-size:10.1px;color:#6f757e;-webkit-text-stroke:0">(4 cores allocated)</span></div>
<div class="a" style="left:406.5px;top:110px;font-size:10px;color:#333;line-height:12px;letter-spacing:-0.1px">Container memory usage</div>
<svg class="a" style="left:526px;top:108.5px" width="14" height="14" viewBox="0 0 14 14" fill="none" stroke="#444" stroke-width="1.3"><circle cx="7" cy="7" r="5.8"/><path d="M7 6V10.3"/><circle cx="7" cy="4" r="0.5" fill="#444"/></svg>
<div class="a" style="left:406.5px;top:130.5px;font-size:12.75px;color:#3a937f;line-height:15px;letter-spacing:0;-webkit-text-stroke:0.2px #3a937f">9.38MB<span style="color:#5f6670;-webkit-text-stroke:0.2px #5f6670"> / 5.96GB</span></div>
<div class="a" style="left:629px;top:109px;font-size:11.3px;color:#1d63d3;line-height:14px;-webkit-text-stroke:0.2px #1d63d3">Show charts</div>
<svg class="a" style="left:702px;top:113px" width="10" height="7" viewBox="0 0 10 7" fill="none" stroke="#1d63d3" stroke-width="1.8"><path d="M1 1L5 5L9 1"/></svg>
<!-- toolbar -->
<div class="a" style="left:64px;top:171.5px;width:167.5px;height:25.5px;border:1px solid #dcdde2;border-radius:3px;background:#f9f9f9"></div>
<svg class="a" style="left:78px;top:177px" width="13" height="13" viewBox="0 0 13 13" fill="none" stroke="#333" stroke-width="1.6"><circle cx="5.2" cy="5.2" r="4"/><path d="M8.2 8.2L12 12"/></svg>
<div class="a" style="left:102px;top:177px;font-size:12px;color:#6d737c;line-height:14px">Search</div>
<svg class="a" style="left:253px;top:178px" width="16" height="12" viewBox="0 0 16 12" fill="#5b6473"><rect x="0" y="0" width="4" height="12"/><rect x="6" y="0" width="4" height="12"/><rect x="12" y="0" width="4" height="12"/></svg>
<div class="a" style="left:300px;top:179px;width:23px;height:9px;border-radius:5px;background:#c9ccd4"></div>
<div class="a" style="left:299px;top:177.5px;width:12px;height:12px;border-radius:50%;background:#8d939d"></div>
<div class="a" style="left:334px;top:177px;font-size:11.5px;color:#555b63;line-height:14px">Only running</div>
<!-- table header -->
<div class="a" style="left:77px;top:224px;width:14px;height:14px;border:1.6px solid #697180;border-radius:2px"></div>
<div class="a" style="left:136px;top:224px;font-size:12px;color:#222;line-height:14px;-webkit-text-stroke:0.2px #222">Name</div>
<div class="a" style="left:304px;top:225px;width:1px;height:11px;background:#e1e2e6"></div>
<div class="a" style="left:312px;top:224px;font-size:12px;color:#222;line-height:14px;-webkit-text-stroke:0.2px #222">Image</div>
<div class="a" style="left:367.5px;top:225px;width:1px;height:11px;background:#e1e2e6"></div>
<div class="a" style="left:376px;top:224px;font-size:12px;color:#222;line-height:14px;-webkit-text-stroke:0.2px #222">Status</div>
<div class="a" style="left:447.5px;top:225px;width:1px;height:11px;background:#e1e2e6"></div>
<div class="a" style="left:485px;top:224px;width:51px;text-align:right;font-size:12px;color:#222;line-height:14px;-webkit-text-stroke:0.2px #222;letter-spacing:-0.75px">CPU (%)</div>
<div class="a" style="left:544px;top:225px;width:1px;height:11px;background:#e1e2e6"></div>
<div class="a" style="left:552px;top:224px;font-size:12px;color:#222;line-height:14px;-webkit-text-stroke:0.2px #222">Port(s)</div>
<!-- row -->
<div class="a" style="left:64px;top:254px;width:552px;height:42px;background:#eff0f3"></div>
<div class="a" style="left:77px;top:267px;width:14px;height:14px;border:1.6px solid #697180;border-radius:2px"></div>
<svg class="a" style="left:137px;top:265.5px" width="20" height="18" viewBox="0 0 20 18"><path d="M10 0.5L19 4V14L10 17.5L1 14V4Z" fill="#3a9c89"/><path d="M11.8 8V15.2M13.6 7.3V14.5M15.4 6.6V13.8M17.2 5.9V13.1" stroke="#dff2ed" stroke-width="0.9"/></svg>
<div class="a" style="left:173px;top:255.5px;font-size:10.8px;font-weight:bold;color:#1d63d3;line-height:14px;text-decoration:underline;letter-spacing:0">sqlsrvContainer</div>
<div class="a" style="left:173px;top:276px;font-size:10px;color:#333;line-height:13px;letter-spacing:0">fcca797a3b65</div>
<svg class="a" style="left:243px;top:276.5px" width="10" height="11" viewBox="0 0 10 11" fill="none" stroke="#8a9099" stroke-width="1.1"><rect x="3" y="3" width="6" height="7.5" rx="1"/><path d="M1 8V1.5A1 1 0 0 1 2 0.5H6.5"/></svg>
<div class="a" style="left:310px;top:266.5px;font-size:12px;color:#3f7ee0;line-height:14px;text-decoration:underline">test-sqlsrv</div>
<div class="a" style="left:374.5px;top:266.5px;font-size:11.2px;color:#333;line-height:14px">Running</div>
<div class="a" style="left:485px;top:266.5px;width:52px;text-align:right;font-size:11.5px;color:#444;line-height:14px">0%</div>
<div class="a" style="left:544px;top:254.5px;width:72px;height:41px;border:1px solid #7aa8e8"></div>
<div class="a" style="left:550px;top:266.5px;font-size:11.5px;color:#3f6dc7;line-height:14px;text-decoration:underline">8080:80</div>
<svg class="a" style="left:596px;top:268.5px" width="10" height="10" viewBox="0 0 10 10" fill="none" stroke="#3366cc" stroke-width="1.4"><path d="M4 1H1V9H9V6M5.5 1H9V4.5M9 1L4.5 5.5"/></svg>
<!-- actions panel -->
<div class="a" style="left:615px;top:210px;width:121px;height:564px;background:#fbfbfb;border-radius:0 3px 0 0;box-shadow:-2px 0 3px rgba(0,0,0,0.04)"></div>
<div class="a" style="left:615px;top:210px;width:1px;height:564px;background:#e7e7ea"></div>
<div class="a" style="left:624px;top:224px;font-size:12px;color:#222;line-height:14px;-webkit-text-stroke:0.2px #222">Actions</div>
<div class="a" style="left:616px;top:253.5px;width:120px;height:1px;background:#eeeef0"></div>
<div class="a" style="left:616px;top:295px;width:120px;height:1px;background:#eeeef0"></div>
<div class="a" style="left:629.5px;top:271px;width:7px;height:7px;background:#5b6473"></div>
<div class="a" style="left:664px;top:270px;width:2px;height:2px;border-radius:50%;background:#5b6473;box-shadow:0 3.5px 0 #5b6473,0 7px 0 #5b6473"></div>
<div class="a" style="left:690.5px;top:265px;width:1px;height:19px;background:#e4e5e8"></div>
<svg class="a" style="left:712.5px;top:268px" width="9" height="11" viewBox="0 0 9 11" fill="#5b6473"><path d="M0 1.2H2.5L3 0.3H6L6.5 1.2H9V2.3H0Z"/><path d="M0.8 3H8.2V10A1 1 0 0 1 7.2 11H1.8A1 1 0 0 1 0.8 10Z"/></svg>
<!-- hscroll -->
<div class="a" style="left:64px;top:774px;width:672px;height:3px;background:#ececef;border-radius:2px"></div>
<div class="a" style="left:64px;top:774px;width:570px;height:3px;background:#7c8598;border-radius:2px"></div>
<div class="a" style="left:655.5px;top:784px;width:80px;text-align:right;font-size:11.7px;color:#222;line-height:14px">Showing 1 item</div>
<!-- status bar -->
<div class="a" style="left:0;top:813px;width:38px;height:19px;background:#3a9c89"></div>
<svg class="a" style="left:10px;top:816px" width="18" height="13" viewBox="0 0 18 13" fill="#fff"><path d="M0.5 6.5H14.3C14.6 5.5 15.5 5 16.3 5.2C16.5 5.8 16.1 6.6 17.5 6.5C17 7.3 16.2 7.5 15.5 7.4C14 10.6 10.8 12.5 6.7 12.5C3 12.5 0.8 10.5 0.5 6.5Z"/><rect x="2" y="4.6" width="1.7" height="1.5"/><rect x="4" y="4.6" width="1.7" height="1.5"/><rect x="6" y="4.6" width="1.7" height="1.5"/><rect x="8" y="4.6" width="1.7" height="1.5"/><rect x="4" y="2.7" width="1.7" height="1.5"/><rect x="6" y="2.7" width="1.7" height="1.5"/><rect x="8" y="2.7" width="1.7" height="1.5"/><rect x="8" y="0.8" width="1.7" height="1.5"/><rect x="10" y="4.6" width="1.7" height="1.5"/></svg>
<div class="a" style="left:51px;top:817px;font-size:9.5px;color:#555;line-height:12px">RAM 1.16 GB</div>
<div class="a" style="left:119.5px;top:817px;font-size:9.3px;color:#555;line-height:12px">CPU 0.00%</div>
<svg class="a" style="left:187px;top:816.5px" width="7" height="11" viewBox="0 0 7 11" fill="#333"><rect x="1.5" y="0" width="1" height="3"/><rect x="4.5" y="0" width="1" height="3"/><path d="M0 3H7V6A3 3 0 0 1 4 9V11H3V9A3 3 0 0 1 0 6Z"/></svg>
<div class="a" style="left:199.5px;top:817px;font-size:10px;color:#555;line-height:12px">Connected to Hub</div>
<svg class="a" style="left:706.5px;top:816.5px" width="11" height="11" viewBox="0 0 11 11" fill="none" stroke="#e5893a" stroke-width="1"><circle cx="5.5" cy="5.5" r="4.8"/><path d="M5.5 4.5V8.3" stroke-width="1.1"/><circle cx="5.5" cy="3" r="0.45" fill="#e5893a"/></svg>
<div class="a" style="left:722px;top:817px;font-size:10px;color:#555;line-height:12px">v4.22.0</div>

</div>
<div id="task"></div>
<svg class="a" style="left:12px;top:841px" width="14" height="14" viewBox="12 841 14 14" fill="#fff"><path d="M12.6 843.2L17.3 842.6V847.3H12.6Z M18.9 842.4L25.7 841.4V847.3H18.9Z M12.6 848.2H17.3V853.2L12.6 852.6Z M18.9 848.2H25.7V854.6L18.9 853.5Z"/></svg>
<div class="a" style="left:38px;top:832px;width:230px;height:32px;background:#f0f0f0"></div>
<svg class="a" style="left:47px;top:841px" width="14" height="14" viewBox="0 0 14 14" fill="none" stroke="#222" stroke-width="1.1"><circle cx="8.5" cy="5.5" r="4.5"/><path d="M5.3 8.7L0.8 13.2"/></svg>
<div class="a" style="left:70.5px;top:842px;font-size:12px;color:#3a3a3a;line-height:15px;letter-spacing:-0.2px">Type here to search</div>
<div class="a" style="left:208px;top:835px;width:57px;height:26px;border-radius:4px;background:#e2e2e2"></div>
<svg class="a" style="left:224px;top:837px" width="24" height="20" viewBox="0 0 24 20"><defs><linearGradient id="bc" x1="0" y1="0" x2="0" y2="1"><stop offset="0" stop-color="#f6a21d"/><stop offset="0.55" stop-color="#e4850c"/><stop offset="0.56" stop-color="#b85f06"/><stop offset="1" stop-color="#a14f05"/></linearGradient></defs><path d="M8 4V2.2C8 1.5 8.5 1 9.2 1H14.8C15.5 1 16 1.5 16 2.2V4" fill="none" stroke="#333" stroke-width="1.4"/><rect x="0.5" y="4" width="23" height="15.5" rx="2" fill="url(#bc)"/><rect x="10.5" y="9" width="3" height="3" fill="#ffe14d"/></svg>
<!-- explorer -->
<svg class="a" style="left:280px;top:838px" width="20" height="18" viewBox="0 0 20 18"><path d="M0.5 2C0.5 1.2 1 0.8 1.8 0.8H7L9 2.8H18.2C19 2.8 19.5 3.3 19.5 4V5H0.5Z" fill="#e7a628"/><rect x="0.5" y="4.5" width="19" height="13" rx="1" fill="#fcd463"/><path d="M6 11H14V17.5H12V13H8V17.5H6Z" fill="#1f87d6"/></svg>
<!-- cmd -->
<svg class="a" style="left:319px;top:839px" width="20" height="16" viewBox="0 0 20 16"><rect x="0.5" y="0.5" width="19" height="15" fill="#0c0c0c" stroke="#7a7a7a" stroke-width="1"/><rect x="0.5" y="0.5" width="19" height="2.5" fill="#9a9a9a"/><path d="M2.5 5L5 6.5L2.5 8M6 8.5H9" stroke="#ddd" stroke-width="0.8" fill="none"/><path d="M11 11H15" stroke="#ccc" stroke-width="0.8"/></svg>
<!-- vscode -->
<svg class="a" style="left:359px;top:838px" width="19" height="19" viewBox="0 0 19 19"><path d="M13.5 0.8L18.3 3V16L13.5 18.2L5 10.3L1.8 12.8L0.7 12.2V6.8L1.8 6.2L5 8.7Z M13.7 5L9 9.5L13.7 14Z" fill="#1f9cf0" fill-rule="evenodd"/><path d="M13.5 0.8L18.3 3V16L13.5 18.2Z" fill="#0e6fc1"/></svg>
<!-- edge -->
<svg class="a" style="left:398px;top:838px" width="19" height="19" viewBox="0 0 19 19"><defs><linearGradient id="eg1" x1="0" y1="0" x2="1" y2="1"><stop offset="0" stop-color="#35c1f1"/><stop offset="0.6" stop-color="#1a8fd9"/><stop offset="1" stop-color="#0c59a4"/></linearGradient><linearGradient id="eg2" x1="0" y1="0" x2="1" y2="0"><stop offset="0" stop-color="#51db76"/><stop offset="1" stop-color="#33bde0"/></linearGradient></defs><circle cx="9.5" cy="9.5" r="9" fill="url(#eg1)"/><path d="M9.5 0.5A9 9 0 0 1 18.5 9.5C18.5 11.5 16.5 12.5 14 12.5H8.5C8.5 9.5 11 8 13 8.5C12 5.5 9 4 5 5A9 9 0 0 1 9.5 0.5Z" fill="url(#eg2)"/><path d="M8.5 12.5C8.5 15 11 17 14 16.5A9 9 0 0 1 2 14C4 16 7 16 8.5 12.5Z" fill="#0b4f91"/></svg>
<!-- ubuntu-like app -->
<svg class="a" style="left:437px;top:838px" width="19" height="19" viewBox="0 0 19 19"><rect x="0" y="0" width="19" height="19" fill="#e9571f"/><rect x="3" y="0" width="13" height="19" fill="#fff"/><circle cx="9.5" cy="12" r="3.5" fill="none" stroke="#e9571f" stroke-width="1.3" stroke-dasharray="3 1.5"/></svg>
<!-- paint -->
<svg class="a" style="left:477px;top:838px" width="19" height="19" viewBox="0 0 19 19"><defs><linearGradient id="pt" x1="0" y1="1" x2="1" y2="0"><stop offset="0" stop-color="#8a49f0"/><stop offset="1" stop-color="#e86fe0"/></linearGradient></defs><path d="M2.5 8.5C2.5 14 6 18 10 17.5C13 17 14.5 13.5 12.5 11.5L6 6.5C4 5.5 2.5 6.5 2.5 8.5Z" fill="url(#pt)"/><path d="M8 11.5L16.5 2" stroke="#b67cf0" stroke-width="2.4" stroke-linecap="round"/><rect x="14" y="0.5" width="4" height="4" rx="1" fill="#6c3fd6" transform="rotate(45 16 2.5)"/></svg>
<!-- xampp -->
<svg class="a" style="left:515px;top:837px" width="20" height="20" viewBox="0 0 13 13"><rect width="13" height="13" rx="1.3" fill="#f57d20"/><path d="M3.5 3C2 3 1.8 4.3 2.1 5.3C2.3 6 2.3 7 2.1 7.7C1.8 8.7 2 10 3.5 10C4.8 10 5.3 9 6.5 8.8C7.7 9 8.2 10 9.5 10C11 10 11.2 8.7 10.9 7.7C10.7 7 10.7 6 10.9 5.3C11.2 4.3 11 3 9.5 3C8.2 3 7.7 4 6.5 4.2C5.3 4 4.8 3 3.5 3Z" fill="none" stroke="#fff" stroke-width="1.3"/></svg>
<!-- outlook -->
<svg class="a" style="left:555px;top:838px" width="20" height="18" viewBox="0 0 20 18"><rect x="7" y="1" width="12" height="15" rx="1" fill="#28a8ea"/><path d="M7 9L19 9V16H7Z" fill="#0f78d4"/><path d="M7 9L19 16H7Z" fill="#1490df"/><rect x="0.5" y="3.5" width="11" height="11" rx="1" fill="#0a5fb4"/><ellipse cx="6" cy="9" rx="2.8" ry="3.2" fill="none" stroke="#fff" stroke-width="1.5"/></svg>
<!-- teams -->
<svg class="a" style="left:594px;top:837px" width="21" height="20" viewBox="0 0 21 20"><circle cx="14" cy="3" r="2.2" fill="#7b83eb"/><circle cx="18.5" cy="4.5" r="1.7" fill="#5059c9"/><rect x="10" y="6" width="10" height="8" rx="2" fill="#5059c9"/><rect x="0.5" y="3.5" width="11" height="11" rx="1" fill="#4b53bc"/><path d="M3 6.3H9M6 6.3V12.5" stroke="#fff" stroke-width="1.6"/><rect x="2" y="13" width="4" height="4" fill="#2aa5a0"/><circle cx="14.5" cy="13.5" r="5.5" fill="#13a10e"/><path d="M12 13.5L14 15.5L17.3 11.8" fill="none" stroke="#fff" stroke-width="1.4"/></svg>
<!-- notepad -->
<svg class="a" style="left:634px;top:838px" width="19" height="18" viewBox="0 0 19 18"><path d="M4 1L17 1L15 17L2 17Z" fill="#e8c77a"/><path d="M4.5 0.5L17.5 0.5L15.5 16.5L2.5 16.5Z" fill="#b5e4ec"/><path d="M4.5 0.5L17.5 0.5L15.5 16.5Z" fill="#7fc9d8"/><path d="M2.5 16.5L8 6L15.5 16.5Z" fill="#a5dbe5"/></svg>
<!-- docker highlighted -->
<div class="a" style="left:663px;top:832px;width:38px;height:32px;background:#5e5e5e"></div>
<svg class="a" style="left:672px;top:838px" width="20" height="20" viewBox="0 0 20 20"><circle cx="10" cy="10" r="9.8" fill="#1d91e8"/><path d="M3 10.3H15C15.3 9.5 16 9.2 16.7 9.4C16.8 9.9 16.6 10.4 17.6 10.3C17.2 11 16.5 11.1 16 11.1C14.8 13.8 12.3 15.3 9 15.3C6 15.3 3.5 13.7 3 10.3Z" fill="#fff"/><rect x="4.5" y="8.6" width="1.5" height="1.3" fill="#fff"/><rect x="6.3" y="8.6" width="1.5" height="1.3" fill="#fff"/><rect x="8.1" y="8.6" width="1.5" height="1.3" fill="#fff"/><rect x="9.9" y="8.6" width="1.5" height="1.3" fill="#fff"/><rect x="6.3" y="7" width="1.5" height="1.3" fill="#fff"/><rect x="8.1" y="7" width="1.5" height="1.3" fill="#fff"/><rect x="9.9" y="7" width="1.5" height="1.3" fill="#fff"/><rect x="9.9" y="5.4" width="1.5" height="1.3" fill="#fff"/></svg>
<!-- underlines -->
<div class="a" style="left:274px;top:862px;width:32px;height:2px;background:#76b9ed"></div>
<div class="a" style="left:314px;top:862px;width:32px;height:2px;background:#76b9ed"></div>
<div class="a" style="left:353px;top:862px;width:32px;height:2px;background:#76b9ed"></div>
<div class="a" style="left:392px;top:862px;width:32px;height:2px;background:#76b9ed"></div>
<div class="a" style="left:509px;top:862px;width:32px;height:2px;background:#76b9ed"></div>
<div class="a" style="left:588px;top:862px;width:32px;height:2px;background:#76b9ed"></div>
<div class="a" style="left:627px;top:862px;width:32px;height:2px;background:#76b9ed"></div>
<div class="a" style="left:663px;top:862px;width:38px;height:2px;background:#76b9ed"></div>
<!-- tray -->
<svg class="a" style="left:1336px;top:844px" width="11" height="7" viewBox="0 0 11 7" fill="none" stroke="#fff" stroke-width="1.1"><path d="M0.8 6.2L5.5 1.2L10.2 6.2"/></svg>
<svg class="a" style="left:1353px;top:843px" width="15" height="9" viewBox="0 0 15 9"><path d="M0.5 2.5H2.5M0.5 4.5H2.5" stroke="#fff" stroke-width="0.9"/><path d="M2.5 1V6C2.5 7 3.3 7.5 4 7.5" fill="none" stroke="#fff" stroke-width="0.9"/><rect x="4.5" y="1.5" width="9" height="6.5" rx="0.8" fill="none" stroke="#fff" stroke-width="1"/><rect x="5.7" y="2.7" width="6.6" height="4.1" fill="#fff"/><rect x="13.8" y="3.5" width="1" height="2.5" fill="#fff"/></svg>
<svg class="a" style="left:1373px;top:842px" width="13" height="12" viewBox="0 0 13 12" fill="none" stroke="#ddd" stroke-width="1"><path d="M1 11A10 10 0 0 1 11 1M3.5 11A7.5 7.5 0 0 1 11 3.5M6 11A5 5 0 0 1 11 6M8.5 11A2.5 2.5 0 0 1 11 8.5"/><circle cx="11.5" cy="10.7" r="1.1" fill="#fff" stroke="none"/></svg>
<svg class="a" style="left:1392px;top:842px" width="14" height="12" viewBox="0 0 14 12" fill="none" stroke="#fff" stroke-width="1"><path d="M0.5 4H3L6.5 1V11L3 8H0.5Z"/><path d="M9 4L13 8M13 4L9 8"/></svg>
<div class="a" style="left:1413px;top:842.5px;font-size:10px;color:#fff;line-height:12px;letter-spacing:-0.4px">ENG</div>
<div class="a" style="left:1440px;top:835px;width:52px;text-align:center;font-size:10px;color:#fff;line-height:12px;letter-spacing:-0.3px">15:06</div>
<div class="a" style="left:1440px;top:849px;width:52px;text-align:center;font-size:10px;color:#fff;line-height:12px;letter-spacing:-0.35px">10-05-2024</div>
<svg class="a" style="left:1503px;top:841px" width="14" height="14" viewBox="0 0 14 14" fill="none" stroke="#fff" stroke-width="1"><path d="M0.5 0.5H13.5V10H9L7 12.5L5 10H0.5Z"/></svg>
<div class="a" style="left:1532px;top:832px;width:1px;height:32px;background:#6a747a"></div>

</body></html>
